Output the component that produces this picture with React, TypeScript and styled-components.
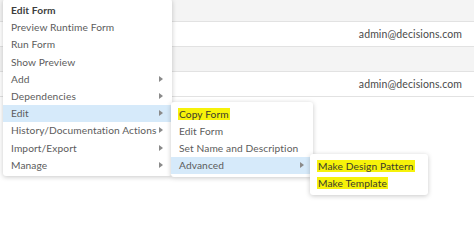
import React from 'react'
import styled, { createGlobalStyle } from 'styled-components'

const GlobalStyle = createGlobalStyle`
  html, body {
    margin: 0;
    padding: 0;
    background: #ffffff;
    overflow: hidden;
  }
  body {
    font-family: Lato, 'Open Sans', Arial, sans-serif;
  }
`

const Page = styled.div`
  position: relative;
  width: 474px;
  height: 206px;
  overflow: hidden;
  background: #ffffff;
`

const Table = styled.div`
  margin-top: -3px;
  display: flex;
  flex-direction: column;
`

const Row = styled.div<{ $shaded?: boolean }>`
  height: 24px;
  border-bottom: 1px solid #e2e2e2;
  background: ${({ $shaded }) => ($shaded ? '#f4f4f4' : '#ffffff')};
  display: flex;
  align-items: center;
  justify-content: flex-end;
  padding-right: 12px;
  font-size: 10.5px;
  letter-spacing: 0.1px;
  color: #4a4a4a;
`

const Menu = styled.div<{ $width: number }>`
  position: absolute;
  width: ${({ $width }) => $width}px;
  padding: 3px 0;
  background: #ffffff;
  border-radius: 3px;
  box-shadow: 0 1px 5px rgba(0, 0, 0, 0.22);
  box-sizing: border-box;
`

const MainMenu = styled(Menu)`
  left: 3px;
  top: -1.5px;
`

const SubMenu = styled(Menu)<{ $overlap: number }>`
  left: calc(100% - ${({ $overlap }) => $overlap}px);
  top: -2.5px;
  z-index: 2;
`

const Item = styled.div<{ $active?: boolean; $bold?: boolean }>`
  position: relative;
  height: 17.2px;
  display: flex;
  align-items: center;
  padding: 0 8px 0 8px;
  font-size: 10.2px;
  letter-spacing: 0.1px;
  font-weight: ${({ $bold }) => ($bold ? 700 : 400)};
  color: ${({ $bold }) => ($bold ? '#3e3e3e' : '#5c5c5c')};
  background: ${({ $active }) => ($active ? '#d6eafa' : 'transparent')};
  white-space: nowrap;
`

const Label = styled.span`
  flex: 1;
`

const Mark = styled.span`
  background: #f6f20a;
  color: #3a3a2a;
  padding: 0 1px;
  margin-left: -1px;
`

const Arrow = styled.span`
  width: 0;
  height: 0;
  border-top: 3px solid transparent;
  border-bottom: 3px solid transparent;
  border-left: 4px solid #8a8a8a;
  margin-right: 1px;
`

export default function App() {
  return (
    <Page>
      <GlobalStyle />
      <Table>
        <Row $shaded />
        <Row>admin@decisions.com</Row>
        <Row $shaded />
        <Row>admin@decisions.com</Row>
      </Table>

      <MainMenu $width={169}>
        <Item $bold>Edit Form</Item>
        <Item>Preview Runtime Form</Item>
        <Item>Run Form</Item>
        <Item>Show Preview</Item>
        <Item>
          <Label>Add</Label>
          <Arrow />
        </Item>
        <Item>
          <Label>Dependencies</Label>
          <Arrow />
        </Item>
        <Item $active>
          <Label>Edit</Label>
          <Arrow />
          <SubMenu $width={142} $overlap={1}>
            <Item>
              <Label>
                <Mark>Copy Form</Mark>
              </Label>
            </Item>
            <Item>Edit Form</Item>
            <Item>Set Name and Description</Item>
            <Item $active>
              <Label>Advanced</Label>
              <Arrow />
              <SubMenu $width={118} $overlap={3}>
                <Item>
                  <Label>
                    <Mark>Make Design Pattern</Mark>
                  </Label>
                </Item>
                <Item>
                  <Label>
                    <Mark>Make Template</Mark>
                  </Label>
                </Item>
              </SubMenu>
            </Item>
          </SubMenu>
        </Item>
        <Item>
          <Label>History/Documentation Actions</Label>
          <Arrow />
        </Item>
        <Item>
          <Label>Import/Export</Label>
          <Arrow />
        </Item>
        <Item>
          <Label>Manage</Label>
          <Arrow />
        </Item>
      </MainMenu>
    </Page>
  )
}
